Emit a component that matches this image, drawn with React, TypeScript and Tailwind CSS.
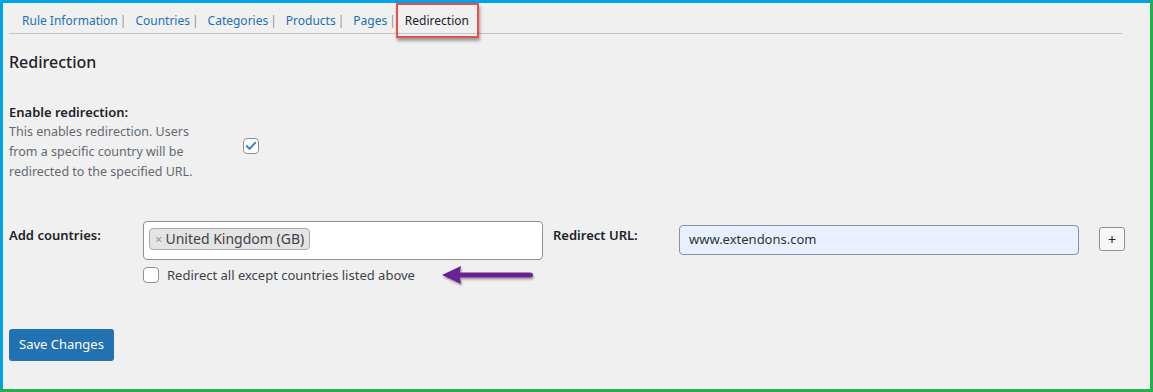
import React from "react";

const font = { fontFamily: '"Noto Sans", "Open Sans", sans-serif' };

function Check() {
  return (
    <svg viewBox="0 0 16 16" className="w-[12px] h-[12px]">
      <path d="M2.5 8.2 L6.2 11.8 L13.5 3.8" fill="none" stroke="#3582c4" strokeWidth="2.6" strokeLinecap="square" />
    </svg>
  );
}

export default function App() {
  const tabs = ["Rule Information", "Countries", "Categories", "Products", "Pages"];
  return (
    <div className="w-[1153px] h-[392px] bg-[#22b14c] pr-[3px] pb-[3px]">
      <div
        className="relative w-full h-full bg-[#f0f0f1] border-t-[3px] border-l-[3px] border-[#00a2e8] text-[13px] text-[#1d2327]"
        style={font}
      >
        <div className="ml-[6px] w-[1113px] h-[31px] border-b border-[#c3c4c7] flex items-start pt-[9px] pl-[13px] leading-[18px] text-[12px]">
          {tabs.map((t) => (
            <span key={t} className="text-[#2271b1] whitespace-nowrap">
              {t}
              <span className="text-[#8c8f94] ml-[2px] mr-[9px]">|</span>
            </span>
          ))}
          <span className="relative text-[#1d2327] whitespace-nowrap">
            Redirection
            <span className="absolute left-[-9px] right-[-10px] top-[-9px] bottom-[-8px] border-2 border-[#ef4b4b] shadow-[1px_3px_3px_rgba(0,0,0,0.35)]" />
          </span>
        </div>

        <div className="pl-[6px]">
          <h2 className="mt-[16px] text-[16px] leading-[24px] text-[#1d2327] font-medium">Redirection</h2>

          <div className="mt-[28px] flex items-start">
            <div className="w-[234px]">
              <div className="font-semibold leading-[20px] text-[#1d2327]">Enable redirection:</div>
              <div className="leading-[20px] text-[#646970] w-[205px] text-[12.5px]">
                This enables redirection. Users from a specific country will be redirected to the specified URL.
              </div>
            </div>
            <div className="mt-[36px] w-[16px] h-[16px] rounded-[4px] border border-[#8c8f94] bg-white flex items-center justify-center">
              <Check />
            </div>
          </div>

          <div className="mt-[39px] flex items-start">
            <div className="w-[134px] mt-[4px] font-semibold leading-[20px]">Add countries:</div>
            <div className="flex flex-col">
              <div className="w-[400px] h-[39px] border border-[#8c8f94] rounded-[4px] bg-white pl-[5px] pt-[6px]">
                <span className="inline-flex items-center h-[22px] px-[5px] bg-[#e4e4e4] border border-[#aaaaaa] rounded-[4px] text-[14px] text-[#3c434a] leading-[20px]">
                  <span className="text-[#999] mr-[3px] text-[13px]">×</span>United Kingdom (GB)
                </span>
              </div>
              <div className="relative mt-[5px] flex items-center">
                <div className="w-[16px] h-[16px] rounded-[4px] border border-[#8c8f94] bg-white" />
                <span className="ml-[8px] text-[#3c434a] leading-[20px]">Redirect all except countries listed above</span>
                {/* purple arrow */}
                <svg className="absolute left-[297px] top-[-1px]" width="96" height="22" viewBox="0 0 96 22">
                  <defs>
                    <filter id="sh" x="-10%" y="-30%" width="120%" height="160%">
                      <feDropShadow dx="1" dy="2" stdDeviation="1" floodColor="#000" floodOpacity="0.35" />
                    </filter>
                  </defs>
                  <g filter="url(#sh)">
                    <path d="M2 11 L21 2 L20 8.5 L90 8.5 Q93 8.5 93 11 Q93 13.5 90 13.5 L20 13.5 L21 20 Z" fill="#6b2191" />
                  </g>
                </svg>
              </div>
            </div>
            <div className="ml-[10px] mt-[4px] w-[126px] font-semibold leading-[20px]">Redirect URL:</div>
            <div className="mt-[4px] w-[400px] h-[30px] border border-[#8c8f94] rounded-[4px] bg-[#e8f0fe] pl-[9px] flex items-center text-[#2c3338]">
              www.extendons.com
            </div>
            <div className="ml-[20px] mt-[6px] w-[26px] h-[24px] border border-[#8c8f94] rounded-[3px] bg-[#f6f7f7] flex items-center justify-center text-[14px] text-[#1d2327]">
              +
            </div>
          </div>

          <button className="mt-[44px] w-[105px] h-[32px] bg-[#2271b1] text-white rounded-[3px] text-[13px]">
            Save Changes
          </button>
        </div>
      </div>
    </div>
  );
}
